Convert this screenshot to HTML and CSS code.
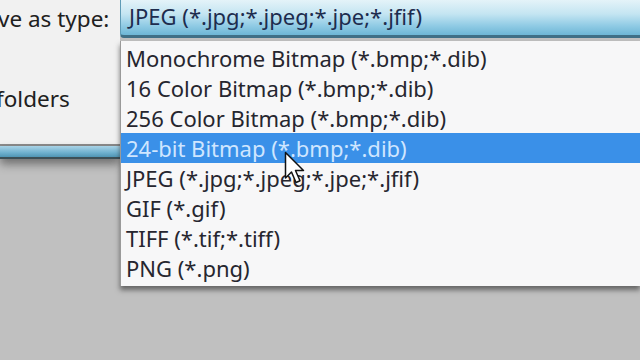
FILE: index.html
```html
<!DOCTYPE html>
<html lang="en">

<head>
  <meta charset="UTF-8">
  <title>Save as type</title>
  <link rel="stylesheet" href="styles.css">
</head>

<body>
  <div class="screen">
    <div class="dialog">
      <div class="panel">
        <span class="label type-label">ve as type:</span>
        <span class="label folders">folders</span>
      </div>
      <div class="frame"></div>
    </div>

    <div class="picker">
      <div class="combo">JPEG (*.jpg;*.jpeg;*.jpe;*.jfif)</div>
      <ul class="list">
        <li>Monochrome Bitmap (*.bmp;*.dib)</li>
        <li>16 Color Bitmap (*.bmp;*.dib)</li>
        <li>256 Color Bitmap (*.bmp;*.dib)</li>
        <li class="selected">24-bit Bitmap (*.bmp;*.dib)</li>
        <li>JPEG (*.jpg;*.jpeg;*.jpe;*.jfif)</li>
        <li>GIF (*.gif)</li>
        <li>TIFF (*.tif;*.tiff)</li>
        <li>PNG (*.png)</li>
      </ul>
    </div>

    <!-- mouse pointer -->
    <svg class="cursor" width="28" height="38" viewBox="0 0 28 38">
      <path d="M1.5 1.5 L1.5 27 L7.5 21 L12 31.5 L16 29.8 L11.5 19.5 L19.5 19.5 Z" fill="#fff" stroke="#111" stroke-width="1.5" stroke-linejoin="round"/>
    </svg>
  </div>
</body>

</html>
```

FILE: styles.css
```css
html,
body {
  margin: 0;
  height: 100%;
}

body {
  background: #c0c0c0;
  font-family: "Noto Sans", "Open Sans", sans-serif;
  overflow: hidden;
}

.screen {
  position: relative;
  width: 640px;
  height: 360px;
  display: flex;
  align-items: flex-start;
}

.dialog {
  width: 120px;
  flex: none;
}

.panel {
  height: 146px;
  background: #f1f1f1;
  border-bottom: 2px solid #8c8c8c;
  display: flex;
  flex-direction: column;
  padding-top: 3px;
  box-sizing: border-box;
}

.label {
  font-size: 22.5px;
  color: #202020;
  white-space: nowrap;
}

.type-label {
  margin-left: -2px;
}

.folders {
  margin-top: 49px;
  margin-left: -4px;
}

.frame {
  height: 11px;
  background: linear-gradient(#a9d3e6, #6fb1cf 60%, #4f95b4);
  border-bottom: 2px solid #3c4f57;
  box-shadow: 0 5px 10px rgba(40, 40, 40, 0.55);
}

.picker {
  flex: 1;
  display: flex;
  flex-direction: column;
}

.combo {
  height: 38px;
  box-sizing: border-box;
  padding: 1px 0 0 8px;
  font-size: 22px;
  color: #1d2c4e;
  background: linear-gradient(#e4f3f9, #c4e5f2 40%, #92cce5 72%, #6db6d6);
  border-bottom: 3px solid #3f6f86;
  border-left: 1px solid #5f9bb6;
  border-bottom-left-radius: 4px;
  white-space: nowrap;
}

.list {
  list-style: none;
  margin: 3px 0 0;
  padding: 2px 0 3px;
  background: #f7f7f8;
  border-left: 1px solid #9a9a9a;
  box-shadow: 0 4px 5px rgba(40, 40, 40, 0.6);
}

.list li {
  height: 30px;
  line-height: 30px;
  padding-left: 5px;
  font-size: 22px;
  color: #26262f;
  white-space: nowrap;
}

.list li.selected {
  background: #3a90e8;
  color: #cfe6ff;
}

.cursor {
  position: absolute;
  left: 284px;
  top: 151px;
}
```
